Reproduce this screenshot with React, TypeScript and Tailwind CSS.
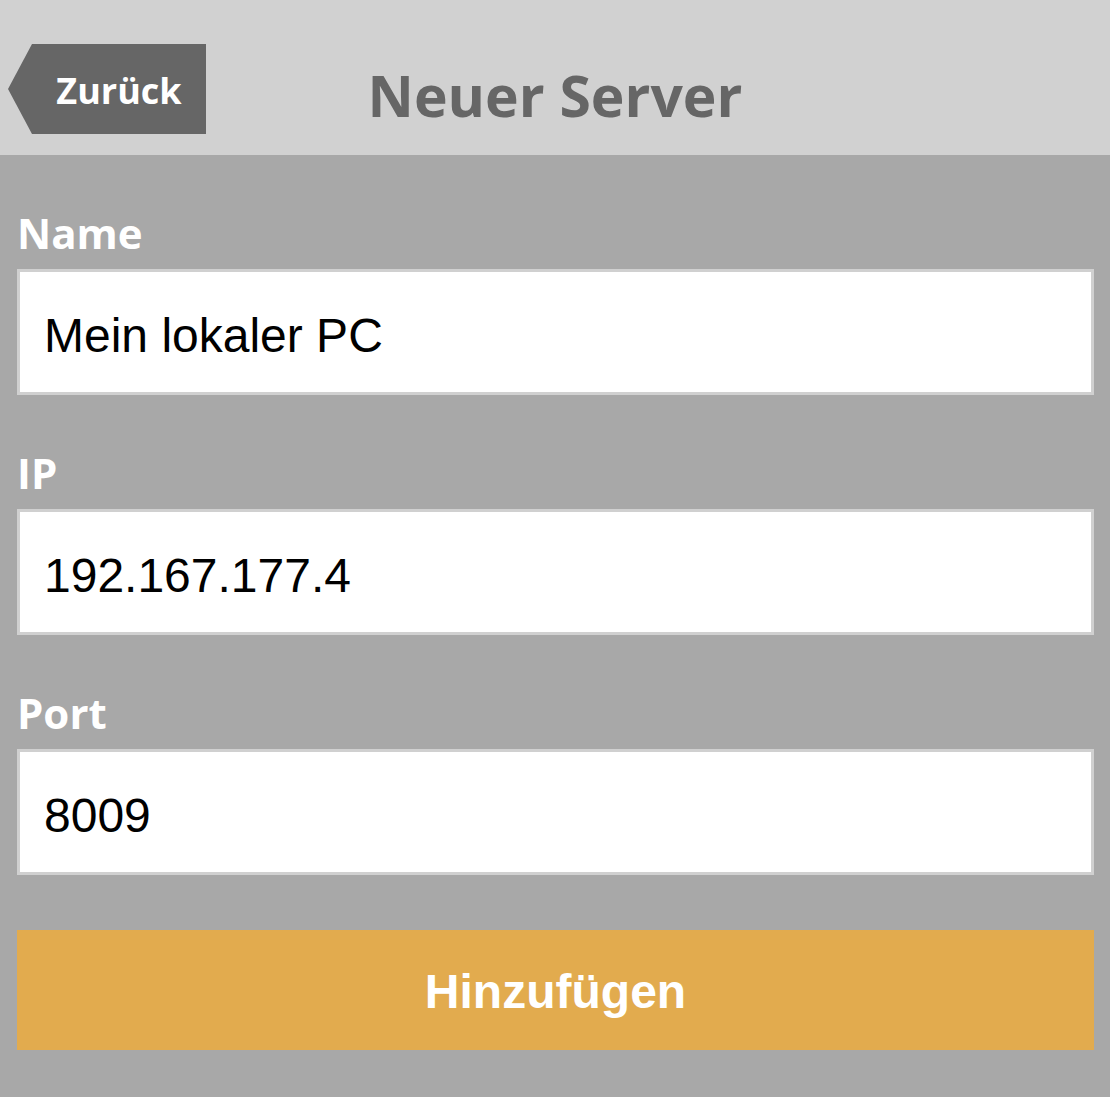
import { useState } from "react";

const fields = [
  { key: "name", label: "Name", value: "Mein lokaler PC" },
  { key: "ip", label: "IP", value: "192.167.177.4" },
  { key: "port", label: "Port", value: "8009" },
];

function BackButton() {
  return (
    <button
      className="mt-[44px] ml-[8px] flex h-[90px] w-[198px] items-center justify-center bg-[#666666] pl-[24px] pt-[3px] font-['Open_Sans',sans-serif] text-[36px] font-bold text-white [clip-path:polygon(24px_0,100%_0,100%_100%,24px_100%,0_50%)]"
    >
      Zurück
    </button>
  );
}

export default function App() {
  const [values, setValues] = useState<Record<string, string>>(
    Object.fromEntries(fields.map((f) => [f.key, f.value]))
  );

  return (
    <div className="flex min-h-screen flex-col bg-[#a8a8a8]">
      <header className="grid h-[155px] grid-cols-[1fr_auto_1fr] items-start bg-[#d1d1d1]">
        <div>
          <BackButton />
        </div>
        <h1 className="mt-[67px] font-['Open_Sans',sans-serif] text-[57px] font-bold leading-none text-[#666666]">
          Neuer Server
        </h1>
        <div />
      </header>

      <main className="flex flex-col pl-[17px] pr-[16px]">
        {fields.map((f) => (
          <div key={f.key} className="mt-[53px] flex flex-col gap-[13px]">
            <label
              htmlFor={f.key}
              className="pt-[1px] font-['Open_Sans',sans-serif] text-[42px] font-bold leading-[47px] text-white"
            >
              {f.label}
            </label>
            <input
              id={f.key}
              value={values[f.key]}
              onChange={(e) => setValues({ ...values, [f.key]: e.target.value })}
              className="h-[126px] w-full border-[3px] border-[#d0d0d0] bg-white pl-[24px] pt-[6px] font-['Liberation_Sans',Arial,sans-serif] text-[48px] text-black outline-none"
            />
          </div>
        ))}

        <button className="mt-[55px] flex h-[120px] w-full items-center justify-center bg-[#e2ab4e] pt-[3px] font-['Liberation_Sans',Arial,sans-serif] text-[48px] font-bold text-white">
          Hinzufügen
        </button>
      </main>
    </div>
  );
}
